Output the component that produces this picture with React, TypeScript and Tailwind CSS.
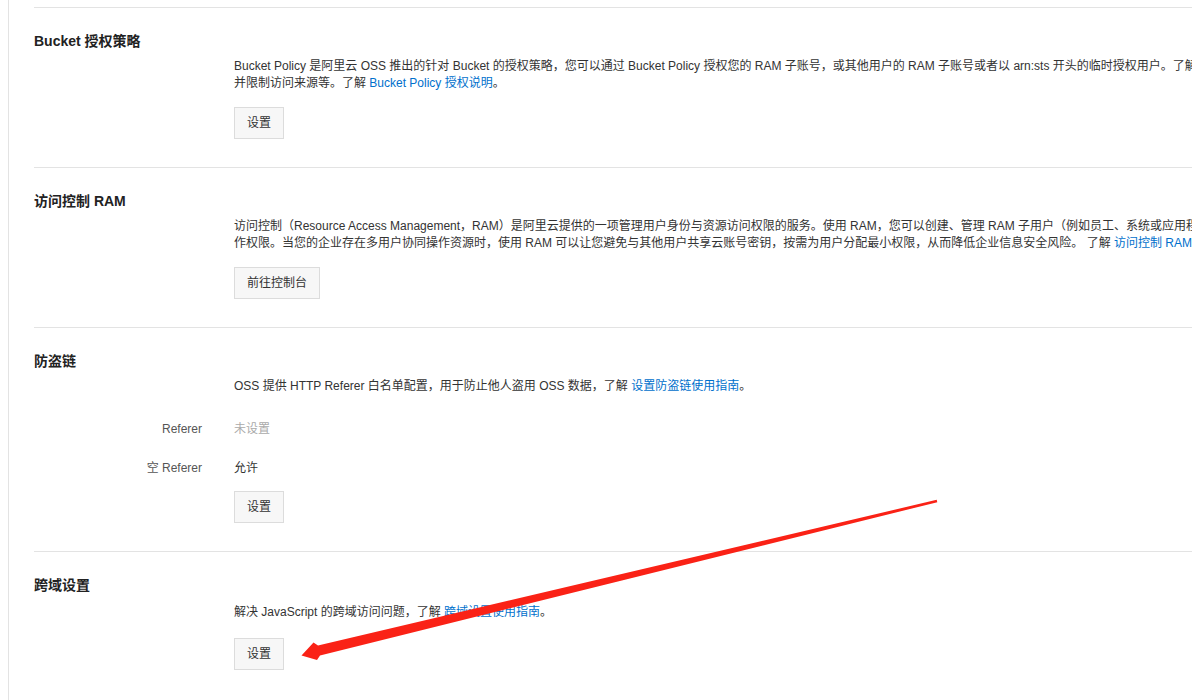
import type { ReactNode } from "react";

const font = {
  fontFamily: '"Liberation Sans", "Noto Sans CJK SC", sans-serif',
};

function Link({ children }: { children: ReactNode }) {
  return <a className="text-[#0070cc]">{children}</a>;
}

function Btn({ children }: { children: ReactNode }) {
  return (
    <button className="h-[32px] border border-[#dcdcdc] bg-[#f7f7f7] px-3 text-[12px] leading-[30px] text-[#333]">
      {children}
    </button>
  );
}

function Section({
  title,
  children,
}: {
  title: string;
  children: ReactNode;
}) {
  return (
    <section className="border-t border-[#e3e3e3] pt-[23px] pb-[28px]">
      <h2 className="text-[14px] font-bold leading-[20px] text-[#222]">{title}</h2>
      <div className="pl-[200px]">{children}</div>
    </section>
  );
}

function Row({ label, children }: { label: string; children: ReactNode }) {
  return (
    <div className="-ml-[200px] flex text-[12px] leading-[17px]">
      <div className="w-[168px] text-right text-[#555]">{label}</div>
      <div className="ml-[32px]">{children}</div>
    </div>
  );
}

function Arrow() {
  return (
    <svg
      className="pointer-events-none absolute inset-0"
      width="1192"
      height="700"
      viewBox="0 0 1192 700"
    >
      <polygon
        fill="#fa2216"
        points="936.7,499.8 318,645.5 313.5,642.5 301.5,655.5 317,660 320,655.5 937.3,502.2"
      />
    </svg>
  );
}

export default function App() {
  return (
    <div className="relative h-[700px] w-full overflow-hidden bg-white text-[#333]" style={font}>
      <div className="flex h-full">
        <div className="w-[9px] shrink-0 border-r border-[#e3e3e3]" />
        <div className="min-w-0 flex-1 pl-[25px] pt-[7px]">
          <div className="w-[1400px]">
            <Section title="Bucket 授权策略">
              <div className="mt-[7px] whitespace-nowrap text-[12px] leading-[17px]">
                <div>
                  Bucket Policy 是阿里云 OSS 推出的针对 Bucket 的授权策略，您可以通过 Bucket Policy 授权您的 RAM 子账号，或其他用户的 RAM 子账号或者以 arn:sts 开头的临时授权用户。了解更多，
                </div>
                <div>
                  并限制访问来源等。了解 <Link>Bucket Policy 授权说明</Link>。
                </div>
              </div>
              <div className="mt-[15px]">
                <Btn>设置</Btn>
              </div>
            </Section>

            <Section title="访问控制 RAM">
              <div className="mt-[7px] whitespace-nowrap text-[12px] leading-[17px]">
                <div>
                  访问控制（Resource Access Management，RAM）是阿里云提供的一项管理用户身份与资源访问权限的服务。使用 RAM，您可以创建、管理 RAM 子用户（例如员工、系统或应用程序），并可以控制这些子用户对资源的操
                </div>
                <div>
                  作权限。当您的企业存在多用户协同操作资源时，使用 RAM 可以让您避免与其他用户共享云账号密钥，按需为用户分配最小权限，从而降低企业信息安全风险。 了解 <Link>访问控制 RAM</Link>。
                </div>
              </div>
              <div className="mt-[15px]">
                <Btn>前往控制台</Btn>
              </div>
            </Section>

            <Section title="防盗链">
              <div className="mt-[7px] whitespace-nowrap text-[12px] leading-[17px]">
                OSS 提供 HTTP Referer 白名单配置，用于防止他人盗用 OSS 数据，了解 <Link>设置防盗链使用指南</Link>。
              </div>
              <div className="mt-[26px]">
                <Row label="Referer">
                  <span className="text-[#aaa]">未设置</span>
                </Row>
              </div>
              <div className="mt-[22px]">
                <Row label="空 Referer">允许</Row>
              </div>
              <div className="mt-[14px]">
                <Btn>设置</Btn>
              </div>
            </Section>

            <Section title="跨域设置">
              <div className="mt-[9px] whitespace-nowrap text-[12px] leading-[17px]">
                解决 JavaScript 的跨域访问问题，了解 <Link>跨域设置使用指南</Link>。
              </div>
              <div className="mt-[17px]">
                <Btn>设置</Btn>
              </div>
            </Section>
          </div>
        </div>
      </div>
      <Arrow />
    </div>
  );
}
